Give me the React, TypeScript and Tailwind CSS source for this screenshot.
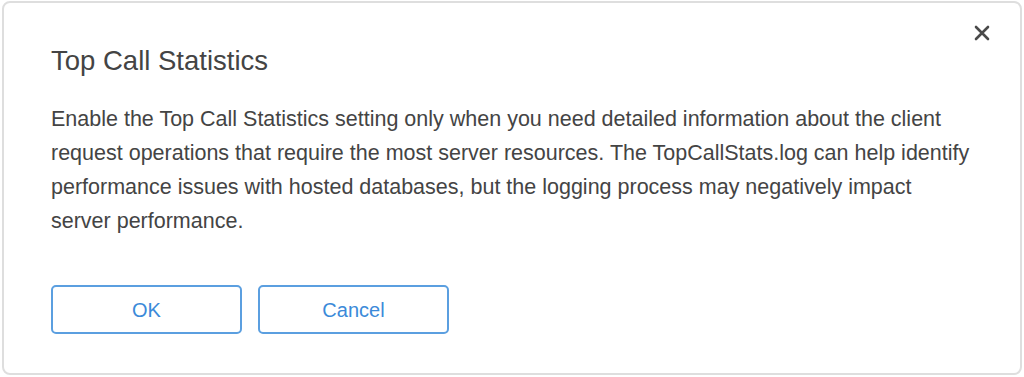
import React from "react";

export default function App() {
  return (
    <div className="w-[1024px] h-[377px] bg-white pt-[1px] pl-[2px]" style={{ fontFamily: '"Liberation Sans", Arial, sans-serif' }}>
      <div className="relative w-[1020px] h-[374px] border-2 border-[#dedede] rounded-[8px] bg-white pl-[47px] pt-[42px]">
        <button className="absolute right-[30px] top-[22px] w-[16px] h-[16px] flex items-center justify-center" aria-label="Close">
          <svg width="16" height="16" viewBox="0 0 16 16">
            <path d="M2 2 L14 14 M14 2 L2 14" stroke="#4a4a4a" strokeWidth="2.6" strokeLinecap="round" />
          </svg>
        </button>
        <h2 className="text-[27.5px] leading-[32px] text-[#444444] font-normal m-0">Top Call Statistics</h2>
        <p className="mt-[25px] w-[960px] whitespace-nowrap text-[21.5px] leading-[34px] text-[#444444]">
          Enable the Top Call Statistics setting only when you need detailed information about the client
          <br />
          request operations that require the most server resources. The TopCallStats.log can help identify
          <br />
          performance issues with hosted databases, but the logging process may negatively impact
          <br />
          server performance.
        </p>
        <div className="flex gap-[16px] mt-[47px]">
          <button className="w-[191px] h-[49px] border-2 border-[#5b9fe0] rounded-[5px] text-[#3b8ad9] text-[20px] bg-white">OK</button>
          <button className="w-[191px] h-[49px] border-2 border-[#5b9fe0] rounded-[5px] text-[#3b8ad9] text-[20px] bg-white">Cancel</button>
        </div>
      </div>
    </div>
  );
}
